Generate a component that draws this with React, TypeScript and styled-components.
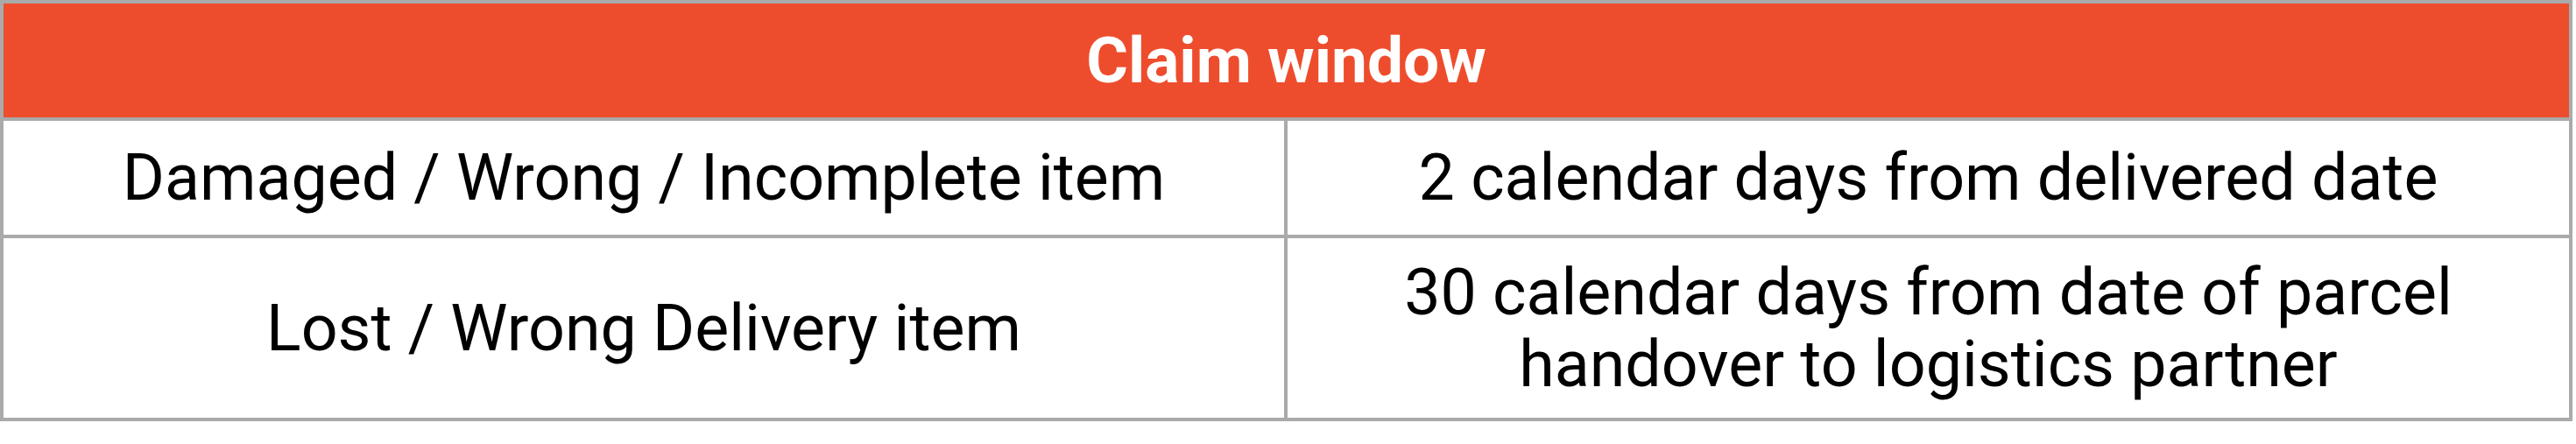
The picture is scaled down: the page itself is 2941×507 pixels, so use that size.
import * as React from 'react';
import styled, { createGlobalStyle } from 'styled-components';

const GlobalStyle = createGlobalStyle`
    html, body {
        margin: 0;
        padding: 0;
        background: #ffffff;
    }
    body {
        font-family: Roboto, "Liberation Sans", Arial, sans-serif;
    }
`;

const ClaimTable = styled.div`
    display: grid;
    grid-template-columns: 1462px 1463px;
    gap: 4px;
    padding: 4px;
    width: 2937px;
    box-sizing: border-box;
    background: #aaaaaa;
`;

const HeaderCell = styled.div`
    grid-column: 1 / span 2;
    height: 130px;
    display: flex;
    align-items: center;
    justify-content: center;
    background: #ee4d2d;
    color: #ffffff;
    font-size: 73px;
    font-weight: 700;
    line-height: 82px;
`;

const Cell = styled.div<{ $height: number }>`
    height: ${p => p.$height}px;
    display: flex;
    align-items: center;
    justify-content: center;
    text-align: center;
    padding: 0 20px;
    box-sizing: border-box;
    background: #ffffff;
    color: #000000;
    font-size: 73.5px;
    font-weight: 400;
    line-height: 82px;
`;

interface Row {
    type: string,
    window: string,
    height: number,
}

const rows: Row[] = [
    { type: 'Damaged / Wrong / Incomplete item', window: '2 calendar days from delivered date', height: 130 },
    { type: 'Lost / Wrong Delivery item', window: '30 calendar days from date of parcel handover to logistics partner', height: 205 },
];

function App() {
    return (
        <>
            <GlobalStyle />
            <ClaimTable>
                <HeaderCell>Claim window</HeaderCell>
                {
                    rows.map((row, index) => (
                        <React.Fragment key={index}>
                            <Cell $height={row.height}>{row.type}</Cell>
                            <Cell $height={row.height}>{row.window}</Cell>
                        </React.Fragment>
                    ))
                }
            </ClaimTable>
        </>
    );
}

export default App;
